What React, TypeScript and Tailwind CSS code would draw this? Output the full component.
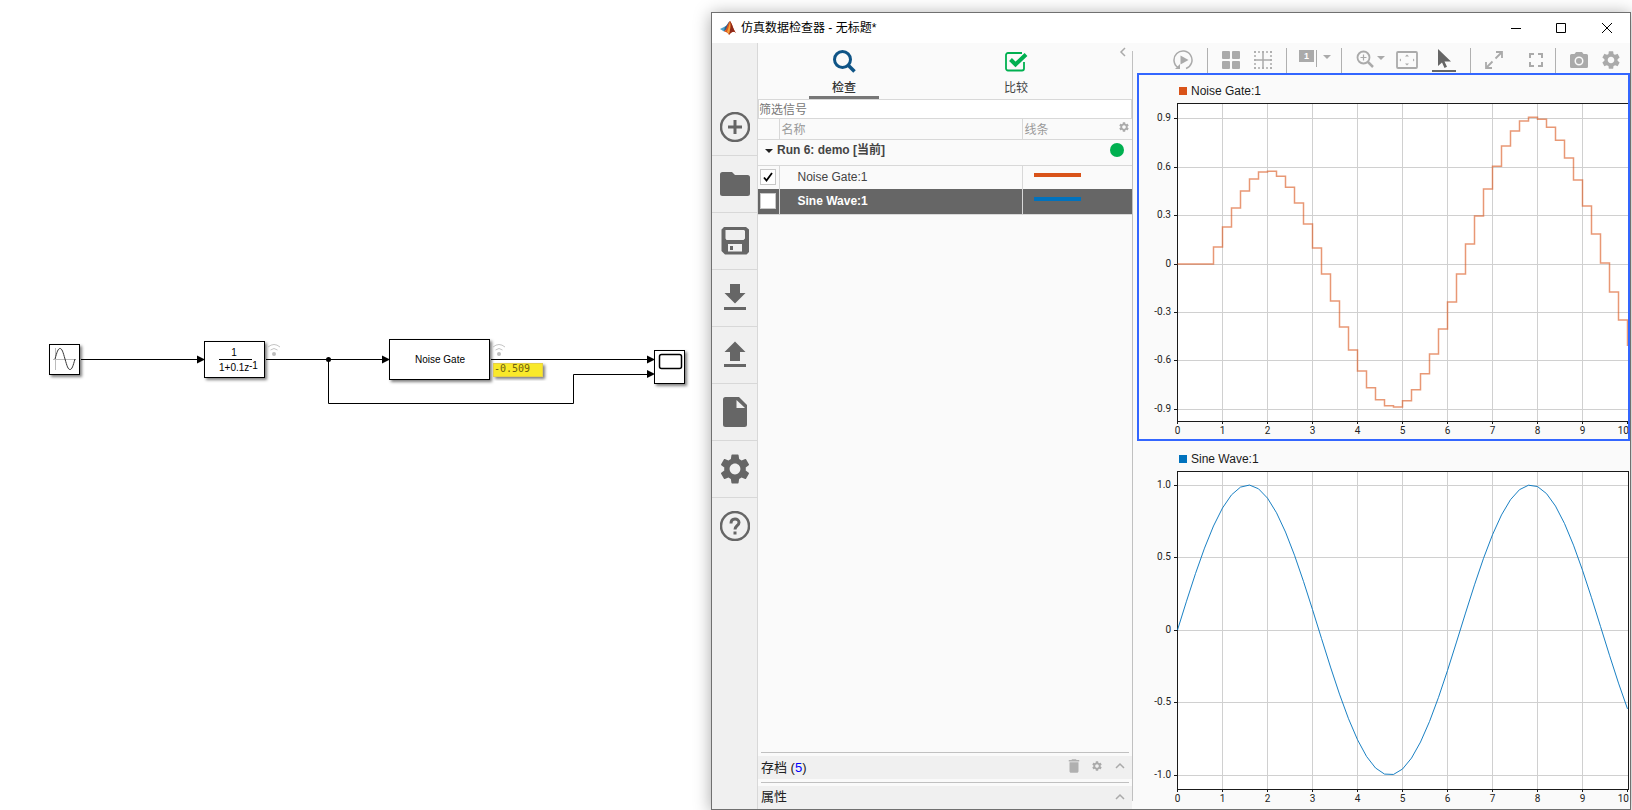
import clsx from "clsx";
import type { ReactNode } from "react";
import { MdDelete, MdSettings } from "react-icons/md";

const NOISE_GATE = [
  0, 0, 0, 0, 0.105, 0.229, 0.346, 0.452, 0.526, 0.569, 0.575, 0.544, 0.476,
  0.377, 0.247, 0.099, -0.062, -0.229, -0.39, -0.532, -0.662, -0.767, -0.841,
  -0.878, -0.885, -0.847, -0.779, -0.68, -0.557, -0.402, -0.235, -0.062, 0.124,
  0.297, 0.464, 0.606, 0.73, 0.823, 0.885, 0.909, 0.897, 0.847, 0.767, 0.656,
  0.52, 0.359, 0.186, 0.006, -0.173, -0.346, -0.507,
];

const SINE_WAVE = Array.from({ length: 51 }, (_, i) => Math.sin(i * 0.2));

// plot box inside the 493x368 chart viewBox
const LEFT = 40;
const TOP = 30;
const BOTTOM = 348;
const RIGHT = 491;
const X_UNIT = 45;

function stepPath(values: number[], y: (v: number) => number) {
  return values
    .map((v, i) => {
      const x = LEFT + 0.5 + i * 0.2 * X_UNIT;
      return i === 0 ? `M${x} ${y(v)}` : `H${x}V${y(v)}`;
    })
    .join("");
}

function linePath(values: number[], y: (v: number) => number) {
  return values
    .map((v, i) => `${i === 0 ? "M" : "L"}${LEFT + 0.5 + i * 0.2 * X_UNIT} ${y(v)}`)
    .join("");
}

type ChartProps = {
  name: string;
  values: number[];
  ticks: { value: number; label: string }[];
  zero: number;
  unit: number;
  stepped?: boolean;
  selected?: boolean;
};

function Chart({ name, values, ticks, zero, unit, stepped, selected }: ChartProps) {
  const y = (v: number) => zero - v * unit;
  return (
    <section
      aria-label={name}
      className={clsx(
        "min-h-0 flex-1",
        selected && "outline-2 -outline-offset-2 outline-[#3366ff]"
      )}
    >
      <svg viewBox="0 0 493 368" className="block h-full w-full" fontFamily="Liberation Sans, Arial, sans-serif">
        <rect x="42" y="14" width="8" height="8" fill={stepped ? "#d95319" : "#0072bd"} />
        <text x="54" y="22" fontSize="12" fill="#1a1a1a">{name}</text>
        <rect x={LEFT} y={TOP} width={RIGHT - LEFT} height={BOTTOM - TOP} fill="#fff" />
        <g stroke="#d0d0d0" shapeRendering="crispEdges">
          {Array.from({ length: 9 }, (_, i) => (
            <path key={i} d={`M${LEFT + 0.5 + (i + 1) * X_UNIT} ${TOP}V${BOTTOM}`} />
          ))}
          {ticks.map((t) => (
            <path key={t.label} d={`M${LEFT} ${Math.floor(y(t.value)) + 0.5}H${RIGHT}`} />
          ))}
        </g>
        <g stroke="#1a1a1a" fill="none" shapeRendering="crispEdges">
          <rect x={LEFT + 0.5} y={TOP + 0.5} width={RIGHT - LEFT} height={BOTTOM - TOP} />
          {ticks.map((t) => (
            <path key={t.label} d={`M${LEFT - 3} ${Math.floor(y(t.value)) + 0.5}H${LEFT}`} />
          ))}
          {Array.from({ length: 11 }, (_, i) => (
            <path key={i} d={`M${LEFT + 0.5 + i * X_UNIT} ${BOTTOM}v3`} />
          ))}
        </g>
        {stepped ? (
          <path d={stepPath(values, y)} fill="none" stroke="#d95319" strokeOpacity="0.6" strokeWidth="1.5" />
        ) : (
          <path d={linePath(values, y)} fill="none" stroke="#0072bd" strokeOpacity="0.9" />
        )}
        <g fontSize="10" fill="#222" fontFamily="Roboto, sans-serif">
          {ticks.map((t) => (
            <text key={t.label} x="34" y={Math.floor(y(t.value)) + 3} textAnchor="end">{t.label}</text>
          ))}
          {Array.from({ length: 10 }, (_, i) => (
            <text key={i} x={LEFT + 0.5 + i * X_UNIT} y="361" textAnchor="middle">{i}</text>
          ))}
          <text x="492" y="361" textAnchor="end">10</text>
        </g>
      </svg>
    </section>
  );
}

function SignalIcon({ x, y }: { x: number; y: number }) {
  return (
    <g transform={`translate(${x} ${y})`} fill="none" stroke="#c4c4c4">
      <circle cx="6" cy="10" r="2" fill="#bdbdbd" stroke="none" />
      <path d="M2.500 6Q6 3 9.500 6" />
      <path d="M0 3Q6-2 12 3" />
    </g>
  );
}

function Diagram() {
  return (
    <svg viewBox="0 0 711 810" className="block w-full" fontFamily="Liberation Sans, Arial, sans-serif" fontSize="10">
      <defs>
        <filter id="block-shadow" x="-20%" y="-20%" width="150%" height="150%">
          <feDropShadow dx="2" dy="2" stdDeviation="1.500" floodOpacity="0.5" />
        </filter>
      </defs>
      <g stroke="#000" fill="none">
        <path d="M81 359.500H197" />
        <path d="M266 359.500H382" />
        <path d="M328.500 359V403.500H573.500V374.500H648" />
        <path d="M491 359.500H648" />
      </g>
      <circle cx="328.500" cy="359.500" r="2.500" />
      <path d="M197 355.500l8 4-8 4zM382 355.500l8 4-8 4zM647 355.500l8 4-8 4zM647 370l8 4-8 4z" />
      <g fill="#fff" stroke="#000" filter="url(#block-shadow)">
        <rect x="49.500" y="344.500" width="30" height="30" />
        <rect x="204.500" y="341.500" width="60" height="36" />
        <rect x="389.500" y="339.500" width="100" height="40" />
        <rect x="654.500" y="350.500" width="30" height="33" />
      </g>
      <path d="M55.500 348V370M53 359.500H76" stroke="#bbb" />
      <path d="M55 359C57 352 58 348.500 60 348.500S63 352 65 359S68 369.500 70 369.500S73 366 75 359" fill="none" stroke="#333" />
      <text x="234" y="356" textAnchor="middle">1</text>
      <path d="M219 359.500H252" stroke="#000" />
      <text x="219" y="371">1+0.1z</text>
      <text x="249" y="369">-1</text>
      <text x="440" y="363" textAnchor="middle">Noise Gate</text>
      <SignalIcon x={268} y={344} />
      <SignalIcon x={493} y={344} />
      <g filter="url(#block-shadow)">
        <rect x="493.500" y="363.500" width="49" height="13" fill="#f9e92b" stroke="#e6d04a" />
      </g>
      <text x="494" y="372" fill="#6d6210" fontFamily="DejaVu Sans Mono, monospace">-0.509</text>
      <rect x="659.500" y="354.500" width="22" height="14" rx="2" fill="#fff" stroke="#000" strokeWidth="1.500" />
    </svg>
  );
}

function Logo() {
  return (
    <svg viewBox="0 0 16 14" className="h-3.5 w-4" aria-hidden>
      <path d="M0 8l5-2.500 2 1.500-3 3.500z" fill="#4a9fc9" />
      <path d="M5 5.500C7 5 8 1 10 0L7 8 4 10.500z" fill="#2b5f8c" />
      <path d="M4 10.500C7 9 7 3 10 0c2 2 3 8 6 12-2-2-4-2-7 2-1-2-2-3-5-3.500z" fill="#d9541e" />
      <path d="M10 0c1 4 0 9-1 14 3-4 5-4 7-2-3-4-4-10-6-12z" fill="#8f2a1a" />
      <path d="M10 1C9 5 8 8 7 11l2 2c1-4 2-8 1-12z" fill="#f6a23a" />
    </svg>
  );
}

function SideIcon({ children }: { children: ReactNode }) {
  return (
    <svg viewBox="0 0 30 30" className="size-[30px]" fill="#666" aria-hidden>
      {children}
    </svg>
  );
}

const sideItems = [
  {
    label: "新建",
    icon: (
      <>
        <circle cx="15" cy="15" r="14" fill="none" stroke="#666" strokeWidth="2.500" />
        <path d="M13.500 8h3v5.500H22v3h-5.500V22h-3v-5.500H8v-3h5.500z" />
      </>
    ),
  },
  { label: "打开", icon: <path d="M2.500 3H12l3 3h12.500A2.500 2.500 0 0130 8.500v16a2.500 2.500 0 01-2.500 2.500h-25A2.500 2.500 0 010 24.500v-19A2.500 2.500 0 012.500 3z" /> },
  {
    label: "保存",
    icon: (
      <path
        fillRule="evenodd"
        d="M4 1h22l3 2.500V26l-2.500 2.500H5L1.500 25V3.500zM5.500 4v8.500l1 1.500h17l1.500-1.500V5l-1-1zM8 18v7.500h14V18zM10 20h3v4h-3z"
      />
    ),
  },
  { label: "导入", icon: <path d="M10 1h10v9h5.500L15 20.500 4.500 10H10zM4 24h22v3H4z" /> },
  { label: "导出", icon: <path d="M15 1.500L25.500 12H20v9H10v-9H4.500zM4 24h22v3H4z" /> },
  {
    label: "报告",
    icon: <path fillRule="evenodd" d="M5.500 0H19l8 8v19.500a2.500 2.500 0 01-2.500 2.500h-19A2.500 2.500 0 013 27.500v-25A2.500 2.500 0 015.500 0zM16.500 3v8H25z" />,
  },
];

function Sidebar() {
  return (
    <nav className="flex w-[46px] flex-none flex-col border-r border-[#d8d8d8] bg-[#f0f0f0] pt-14">
      {sideItems.map((item) => (
        <button
          key={item.label}
          aria-label={item.label}
          className="flex h-[57px] items-center justify-center border-b border-[#d8d8d8]"
        >
          <SideIcon>{item.icon}</SideIcon>
        </button>
      ))}
      <button aria-label="设置" className="flex h-[57px] items-center justify-center border-b border-[#d8d8d8]">
        <MdSettings className="size-9 text-[#666]" />
      </button>
      <button aria-label="帮助" className="flex h-14 items-center justify-center">
        <SideIcon>
          <circle cx="15" cy="15" r="14" fill="none" stroke="#666" strokeWidth="2.500" />
          <path d="M11 12.500c0-6 8-5.500 8-1 0 3-4 3.500-4 7" fill="none" stroke="#666" strokeWidth="3" />
          <path d="M13.500 20.500h3v3h-3z" />
        </SideIcon>
      </button>
    </nav>
  );
}

function Chevron({ className }: { className?: string }) {
  return (
    <svg viewBox="0 0 10 10" className={clsx("size-2.5", className)} fill="none" stroke="#aaa" strokeWidth="1.500" aria-hidden>
      <path d="M1 7l4-4 4 4" />
    </svg>
  );
}

function SignalRow({ name, color, selected }: { name: string; color: string; selected?: boolean }) {
  return (
    <tr className={clsx(selected ? "h-[25px] bg-[#666] font-bold text-white" : "h-6 text-[#444]")}>
      <td className="border-r border-[#d8d8d8]">
        <label className="ml-0.5 grid size-4 place-items-center border border-[#c8c8c8] bg-white">
          <input
            type="checkbox"
            defaultChecked={!selected}
            aria-label={name}
            className="peer col-start-1 row-start-1 size-3.5 appearance-none"
          />
          <svg
            viewBox="0 0 10 10"
            className="pointer-events-none invisible col-start-1 row-start-1 size-2.5 peer-checked:visible"
            fill="none"
            stroke="#000"
            strokeWidth="1.800"
          >
            <path d="M1 5.500l2.500 3L9 1" />
          </svg>
        </label>
      </td>
      <td className="border-r border-[#d8d8d8] pl-[18px]">{name}</td>
      <td className="pl-[11px]">
        <div className={clsx("mb-1 h-1 w-[47px]", color)} />
      </td>
    </tr>
  );
}

function SignalPanel() {
  return (
    <div className="flex w-[374px] flex-none flex-col">
      <div className="flex h-14">
        <button className="flex w-[172px] flex-col items-center pt-1.5 text-xs font-medium text-[#333]">
          <svg viewBox="0 0 24 24" className="size-6" fill="none" stroke="#0f5486" aria-hidden>
            <circle cx="10.500" cy="10.500" r="8" strokeWidth="3" />
            <path d="M16 16l6.500 6.500" strokeWidth="3.500" />
          </svg>
          <span className="mt-[7px] h-4">检查</span>
          <span className="h-[3px] w-[70px] bg-[#777]" />
        </button>
        <button className="flex w-[172px] flex-col items-center pt-1.5 text-xs text-[#444]">
          <svg viewBox="0 0 24 24" className="size-6" fill="none" stroke="#00b050" aria-hidden>
            <path d="M20 13v6.500a2 2 0 01-2 2H4a2 2 0 01-2-2V6a2 2 0 012-2h14" strokeWidth="1.800" />
            <path d="M6.500 10.500l5 5L22 5.500" strokeWidth="4" />
          </svg>
          <span className="mt-[7px]">比较</span>
        </button>
        <button aria-label="折叠" className="flex flex-1 items-start justify-end pt-1 pr-1">
          <Chevron className="-rotate-90" />
        </button>
      </div>
      <input
        aria-label="筛选信号"
        placeholder="筛选信号"
        className="h-5 w-full border border-[#d8d8d8] bg-white pt-0.5 text-xs placeholder:text-[#777]"
      />
      <table className="w-full table-fixed border-collapse text-left text-xs">
        <colgroup>
          <col className="w-[21px]" />
          <col />
          <col className="w-[110px]" />
        </colgroup>
        <thead>
          <tr className="h-5 border-b border-[#d8d8d8] text-[#999]">
            <th className="border-r border-[#d8d8d8] p-0" />
            <th className="border-r border-[#d8d8d8] p-0 pt-1 pl-0.5 font-normal leading-[15px]">名称</th>
            <th className="p-0 pl-0.5 font-normal leading-[15px]">
              <div className="flex items-start justify-between pr-0.5">
                <span className="pt-1">线条</span>
                <button aria-label="列设置" className="pt-0.5">
                  <MdSettings className="size-3 text-[#aaa]" />
                </button>
              </div>
            </th>
          </tr>
        </thead>
        <tbody>
          <tr className="h-[26px] border-b border-[#d8d8d8]">
            <td colSpan={3}>
              <div className="mb-1 flex items-center pl-[7px] pr-2">
                <svg viewBox="0 0 8 4" className="mt-0.5 h-1 w-2" aria-hidden>
                  <path d="M0 0h8L4 4z" fill="#222" />
                </svg>
                <span className="ml-1 flex-1 font-bold text-[#444]">Run 6: demo [当前]</span>
                <span className="size-3.5 rounded-full bg-[#00b050]" />
              </div>
            </td>
          </tr>
          <SignalRow name="Noise Gate:1" color="bg-[#d95319]" />
          <SignalRow name="Sine Wave:1" color="bg-[#0072bd]" selected />
          <tr className="border-t border-[#d8d8d8]">
            <td colSpan={3} />
          </tr>
        </tbody>
      </table>
      <div className="mt-auto text-[13px] leading-5 text-[#222]">
        <div className="mr-[3px] ml-[3px] border-t border-[#c0c0c0]" />
        <div className="mt-[3px] flex h-[23px] items-center bg-[#f0f0f0] pr-[7px] pl-[3px]">
          <span className="flex-1">
            存档 (<a href="#archive" className="text-[#0000ff]">5</a>)
          </span>
          <button aria-label="删除" className="mb-1">
            <MdDelete className="size-[18px] text-[#b0b0b0]" />
          </button>
          <button aria-label="存档设置" className="mb-1 ml-2">
            <MdSettings className="size-3 text-[#aaa]" />
          </button>
          <button aria-label="展开存档" className="mb-1 ml-3">
            <Chevron />
          </button>
        </div>
        <div className="mt-[3px] mr-[3px] ml-[3px] border-t border-[#c0c0c0]" />
        <div className="mt-[3px] flex h-[23px] items-center justify-between bg-[#f0f0f0] pr-[7px] pb-0.5 pl-[3px]">
          <span>属性</span>
          <button aria-label="展开属性">
            <Chevron />
          </button>
        </div>
      </div>
    </div>
  );
}

function Tool({ label, className, children }: { label: string; className?: string; children: ReactNode }) {
  return (
    <button aria-label={label} className={clsx("flex-none", className)}>
      {children}
    </button>
  );
}

function Separator({ className }: { className: string }) {
  return <span className={clsx("h-[25px] w-px flex-none self-end bg-[#b0b0b0]", className)} />;
}

function Toolbar() {
  return (
    <div className="flex h-[30px] flex-none items-center pt-[3px] pl-9 text-[#aaa]">
      <Tool label="重放">
        <svg viewBox="0 0 20 20" className="size-5" fill="none" stroke="currentColor" strokeWidth="1.500">
          <path d="M5 17.500A9 9 0 1113 18.500" />
          <path d="M2 19h5v-5z" fill="currentColor" stroke="none" />
          <path d="M7.500 5.500v9L15.500 10z" fill="currentColor" stroke="none" />
        </svg>
      </Tool>
      <Separator className="ml-3.5" />
      <Tool label="布局" className="ml-3.5">
        <svg viewBox="0 0 18 18" className="size-[18px]" fill="currentColor">
          <rect width="8" height="8" rx="1" />
          <rect x="10" width="8" height="8" rx="1" />
          <rect y="10" width="8" height="8" rx="1" />
          <rect x="10" y="10" width="8" height="8" rx="1" />
        </svg>
      </Tool>
      <Tool label="清除" className="ml-3.5">
        <svg viewBox="0 0 18 18" className="size-[18px]" fill="none" stroke="currentColor" strokeWidth="1.500">
          <path d="M0 1h18M0 17h18M1 0v18M17 0v18" strokeDasharray="2 2" />
          <path d="M9 0v18M0 9h18" />
        </svg>
      </Tool>
      <Separator className="ml-3.5" />
      <Tool label="游标" className="ml-3">
        <svg viewBox="0 0 34 20" className="h-5 w-[34px]" fill="currentColor">
          <rect width="15" height="12" />
          <rect x="17" width="1" height="17" />
          <path d="M24 5h8l-4 4z" />
          <text x="5" y="9" fontSize="9" fontWeight="bold" fill="#fff">1</text>
        </svg>
      </Tool>
      <Separator className="ml-2" />
      <Tool label="缩放" className="ml-3.5">
        <svg viewBox="0 0 30 20" className="h-5 w-[30px]" fill="none" stroke="currentColor" strokeWidth="1.800">
          <circle cx="7.500" cy="7.500" r="6" />
          <path d="M12 12l5 5" strokeWidth="2.500" />
          <path d="M4.500 7.500h6M7.500 4.500v6" strokeWidth="1.200" />
          <path d="M21 6h8l-4 4z" fill="currentColor" stroke="none" />
        </svg>
      </Tool>
      <Tool label="适应视图" className="ml-2.5">
        <svg viewBox="0 0 22 18" className="h-[18px] w-[22px]" fill="none" stroke="currentColor" strokeWidth="1.800">
          <rect x="1" y="1" width="20" height="16" rx="1" />
          <path d="M9 5.500L11 3.500l2 2zM9 12.500l2 2 2-2zM5 7.500L3.500 9 5 10.500zM17 7.500L18.500 9 17 10.500z" fill="currentColor" stroke="none" />
        </svg>
      </Tool>
      <Tool label="选择" className="ml-3.5 self-end">
        <svg viewBox="0 0 24 24" className="size-6 text-[#666]" fill="currentColor">
          <path d="M6 0v17l4-3.500L12.500 19l2.500-1.200-2.500-5.300H19z" />
          <rect y="21" width="24" height="2" />
        </svg>
      </Tool>
      <Separator className="ml-3.5" />
      <Tool label="展开" className="ml-3.5">
        <svg viewBox="0 0 18 18" className="size-[18px]" fill="none" stroke="currentColor" strokeWidth="1.800">
          <path d="M10.500 7.500L17 1M11 1h6v6M7.500 10.500L1 17M1 11v6h6" />
        </svg>
      </Tool>
      <Tool label="全屏" className="ml-[26px]">
        <svg viewBox="0 0 14 14" className="size-3.5" fill="none" stroke="currentColor" strokeWidth="2">
          <path d="M5 1H1v4M9 1h4v4M5 13H1V9M9 13h4V9" />
        </svg>
      </Tool>
      <Separator className="ml-3" />
      <Tool label="快照" className="ml-3.5">
        <svg viewBox="0 0 18 16" className="h-4 w-[18px]" fill="currentColor">
          <path fillRule="evenodd" d="M6 0h6l1.500 2H16.500A1.500 1.500 0 0118 3.500v11a1.500 1.500 0 01-1.500 1.500h-15A1.500 1.500 0 010 14.500v-11A1.500 1.500 0 011.500 2h3zM9 4.500a4.500 4.500 0 100 9 4.500 4.500 0 000-9z" />
          <circle cx="9" cy="9" r="3" />
        </svg>
      </Tool>
      <Tool label="设置" className="ml-3">
        <MdSettings className="size-[22px]" />
      </Tool>
    </div>
  );
}

function TitleBar() {
  return (
    <header className="flex h-[30px] flex-none items-center bg-white pl-2 text-xs text-black">
      <Logo />
      <h1 className="ml-[5px] flex-1">仿真数据检查器 - 无标题*</h1>
      <button aria-label="最小化" className="flex w-[45px] justify-center">
        <svg viewBox="0 0 10 10" className="size-2.5" stroke="#000">
          <path d="M0 5.500h10" />
        </svg>
      </button>
      <button aria-label="最大化" className="flex w-[45px] justify-center">
        <svg viewBox="0 0 10 10" className="size-2.5" fill="none" stroke="#000">
          <path d="M.5.5h9v9h-9z" />
        </svg>
      </button>
      <button aria-label="关闭" className="flex w-[47px] justify-center">
        <svg viewBox="0 0 10 10" className="size-2.5" stroke="#000">
          <path d="M0 0l10 10M10 0L0 10" />
        </svg>
      </button>
    </header>
  );
}

export default function App() {
  return (
    <main className="flex h-screen overflow-hidden bg-white font-['Liberation_Sans','Noto_Sans_CJK_SC',sans-serif]">
      <div className="w-[711px] flex-none">
        <Diagram />
      </div>
      <div className="mt-3 mr-px flex min-w-0 flex-1 flex-col border border-[#707070] bg-[#fafafa] shadow-[0_2px_16px_rgba(0,0,0,0.35)]">
        <TitleBar />
        <div className="flex min-h-0 flex-1">
          <Sidebar />
          <SignalPanel />
          <div className="mt-2 mb-2 w-px flex-none bg-[#c0c0c0]" />
          <div className="flex min-w-0 flex-1 flex-col pl-1">
            <Toolbar />
            <Chart
              name="Noise Gate:1"
              values={NOISE_GATE}
              ticks={[0.9, 0.6, 0.3, 0, -0.3, -0.6, -0.9].map((value) => ({ value, label: String(value) }))}
              zero={191}
              unit={161.5}
              stepped
              selected
            />
            <Chart
              name="Sine Wave:1"
              values={SINE_WAVE}
              ticks={[1, 0.5, 0, -0.5, -1].map((value) => ({
                value,
                label: value === 0 ? "0" : value.toFixed(1),
              }))}
              zero={189}
              unit={145}
            />
          </div>
        </div>
      </div>
    </main>
  );
}
